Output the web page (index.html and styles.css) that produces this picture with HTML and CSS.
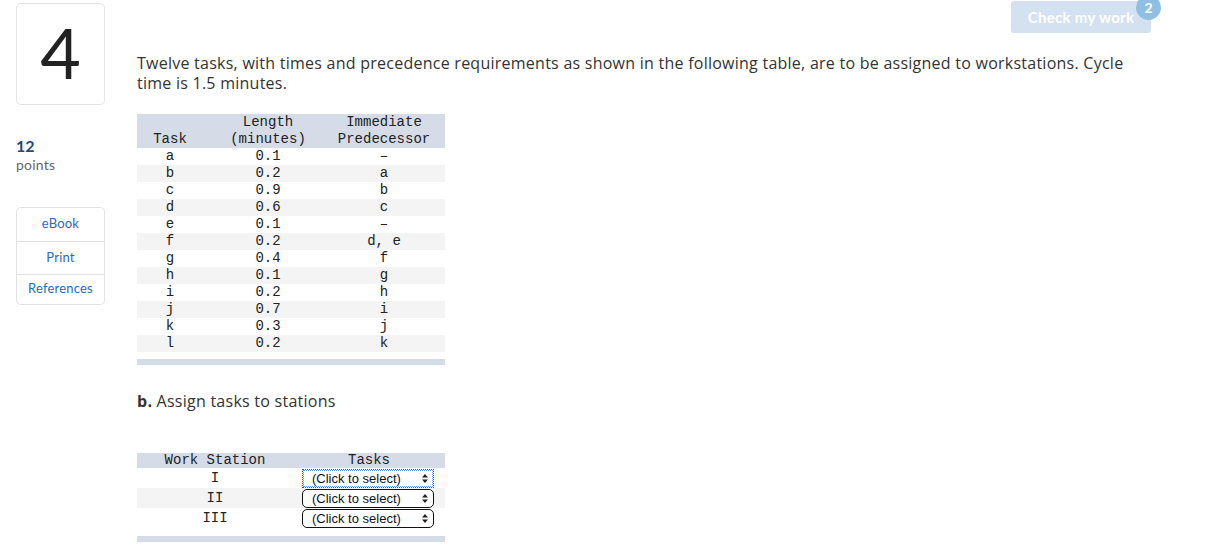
FILE: index.html
```html
<!DOCTYPE html>
<html>
<head>
<meta charset="utf-8">
<link rel="stylesheet" href="styles.css">
</head>
<body>
<div class="page">
  <aside class="side">
    <div class="qnum">4</div>
    <div class="points"><span class="pts-num">12</span><span class="pts-label">points</span></div>
    <nav class="links">
      <a class="link">eBook</a>
      <a class="link">Print</a>
      <a class="link">References</a>
    </nav>
  </aside>
  <main class="main">
    <div class="toolbar">
      <button class="check">Check my work<span class="badge">2</span></button>
    </div>
    <p class="question">Twelve tasks, with times and precedence requirements as shown in the following table, are to be assigned to workstations. Cycle time is 1.5 minutes.</p>
    <table class="data tasks">
      <thead>
        <tr><th class="c1">Task</th><th class="c2">Length<br>(minutes)</th><th class="c3">Immediate<br>Predecessor</th></tr>
      </thead>
      <tbody>
        <tr><td>a</td><td>0.1</td><td class="c3">–</td></tr>
        <tr><td>b</td><td>0.2</td><td class="c3">a</td></tr>
        <tr><td>c</td><td>0.9</td><td class="c3">b</td></tr>
        <tr><td>d</td><td>0.6</td><td class="c3">c</td></tr>
        <tr><td>e</td><td>0.1</td><td class="c3">–</td></tr>
        <tr><td>f</td><td>0.2</td><td class="c3">d, e</td></tr>
        <tr><td>g</td><td>0.4</td><td class="c3">f</td></tr>
        <tr><td>h</td><td>0.1</td><td class="c3">g</td></tr>
        <tr><td>i</td><td>0.2</td><td class="c3">h</td></tr>
        <tr><td>j</td><td>0.7</td><td class="c3">i</td></tr>
        <tr><td>k</td><td>0.3</td><td class="c3">j</td></tr>
        <tr><td>l</td><td>0.2</td><td class="c3">k</td></tr>
      </tbody>
    </table>
    <div class="bar bar1"></div>
    <p class="part"><b>b.</b> Assign tasks to stations</p>
    <table class="data stations">
      <thead>
        <tr><th class="s1">Work Station</th><th class="s2">Tasks</th></tr>
      </thead>
      <tbody>
        <tr><td>I</td><td><div class="select focus"><span>(Click to select)</span><svg class="arr" width="6" height="9" viewBox="0 0 6 9"><path d="M0 3.5 L3 0 L6 3.5 Z M0 5.5 L3 9 L6 5.5 Z" fill="#222"/></svg></div></td></tr>
        <tr><td>II</td><td><div class="select"><span>(Click to select)</span><svg class="arr" width="6" height="9" viewBox="0 0 6 9"><path d="M0 3.5 L3 0 L6 3.5 Z M0 5.5 L3 9 L6 5.5 Z" fill="#222"/></svg></div></td></tr>
        <tr><td>III</td><td><div class="select"><span>(Click to select)</span><svg class="arr" width="6" height="9" viewBox="0 0 6 9"><path d="M0 3.5 L3 0 L6 3.5 Z M0 5.5 L3 9 L6 5.5 Z" fill="#222"/></svg></div></td></tr>
      </tbody>
    </table>
    <div class="bar bar2"></div>
  </main>
</div>
</body>
</html>
```
FILE: styles.css
```css
* { box-sizing: border-box; }
html, body { margin: 0; padding: 0; background: #fff; }
body {
  font-family: "Lato", "Noto Sans", "Liberation Sans", sans-serif;
  color: #333;
  width: 1223px;
  height: 555px;
  overflow: hidden;
}
.page {
  display: flex;
  align-items: flex-start;
  padding-top: 1px;
}
.side {
  width: 89px;
  margin-left: 16px;
  margin-top: 2px;
  display: flex;
  flex-direction: column;
}
.qnum {
  height: 102px;
  border: 1px solid #e4e4e4;
  border-radius: 5px;
  display: flex;
  align-items: center;
  justify-content: center;
  font-size: 70px;
  font-weight: 400;
  color: #222;
  line-height: 1;
  padding-bottom: 4px;
}
.points {
  display: flex;
  flex-direction: column;
  margin-top: 31px;
}
.pts-num {
  font-size: 16px;
  font-weight: 700;
  color: #1c4a84;
  line-height: 20px;
}
.pts-label {
  font-size: 14px;
  color: #666;
  line-height: 18px;
  letter-spacing: 0.2px;
}
.links {
  margin-top: 33px;
  border: 1px solid #e2e2e2;
  border-radius: 5px;
  display: flex;
  flex-direction: column;
}
.link {
  font-size: 13px;
  color: #2a6bb8;
  text-align: center;
  height: 33px;
  line-height: 31px;
  letter-spacing: 0.2px;
}
.link + .link { border-top: 1px solid #e2e2e2; }
.link:last-child { height: 30px; line-height: 27px; }
.main {
  margin-left: 32px;
  width: 1014px;
  display: flex;
  flex-direction: column;
  align-items: flex-start;
}
.toolbar {
  align-self: stretch;
  display: flex;
  justify-content: flex-end;
}
.check {
  position: relative;
  width: 140px;
  height: 32px;
  border: 0;
  border-radius: 3px;
  background: #d3e1f1;
  color: #fff;
  font-family: inherit;
  font-weight: 700;
  font-size: 15px;
  letter-spacing: 0.3px;
  padding: 0;
}
.badge {
  position: absolute;
  right: -10px;
  top: -6px;
  width: 25px;
  height: 25px;
  border-radius: 50%;
  background: #8fc0e3;
  color: #fff;
  font-size: 14px;
  font-weight: 700;
  line-height: 25px;
  text-align: center;
  letter-spacing: 0;
}
.question {
  margin: 20px 0 0;
  width: 1000px;
  font-family: "Open Sans", "Lato", sans-serif;
  font-size: 16px;
  line-height: 20px;
  letter-spacing: 0.25px;
  color: #333;
}
.data {
  border-collapse: collapse;
  width: 308px;
  font-family: "Liberation Mono", "Courier New", monospace;
  font-size: 14px;
  color: #222;
}
.data th {
  background: #d5dbe7;
  font-weight: 400;
  text-align: center;
  vertical-align: bottom;
  padding: 0;
}
.data td {
  text-align: center;
  padding: 0;
}
.data tbody tr:nth-child(even) td { background: #f4f4f4; }
.tasks { margin-top: 21px; }
.tasks th { line-height: 17px; height: 34px; }
.tasks td { height: 17px; line-height: 17px; }
.tasks .c1 { width: 66px; }
.tasks .c2 { width: 130px; }
.tasks .c3 { width: 112px; padding-right: 10px; }
.bar {
  width: 308px;
  height: 6px;
  background: #d5dbe7;
}
.bar1 { margin-top: 7px; }
.part {
  margin: 26px 0 0;
  font-family: "Open Sans", "Lato", sans-serif;
  font-size: 16px;
  line-height: 20px;
  letter-spacing: 0.25px;
  color: #333;
}
.part b { font-weight: 700; }
.stations { margin-top: 42px; }
.stations th { height: 15px; line-height: 15px; }
.stations td { height: 20px; line-height: 18px; }
.stations .s1 { width: 156px; }
.stations .s2 { width: 152px; }
.select {
  display: flex;
  align-items: center;
  justify-content: space-between;
  width: 132px;
  height: 19px;
  margin-left: 9px;
  border: 1px solid #111;
  border-radius: 5px;
  background: #fff;
  padding: 0 5px 0 9px;
  font-family: "Liberation Sans", Arial, sans-serif;
  font-size: 13px;
  color: #111;
  line-height: 17px;
}
.select.focus {
  border: 1px dotted #1d5fbf;
  border-radius: 0;
  outline: 1px dotted #6d9ad8;
  outline-offset: -2px;
}
.arr { display: block; }
.bar2 { margin-top: 8px; }
```
